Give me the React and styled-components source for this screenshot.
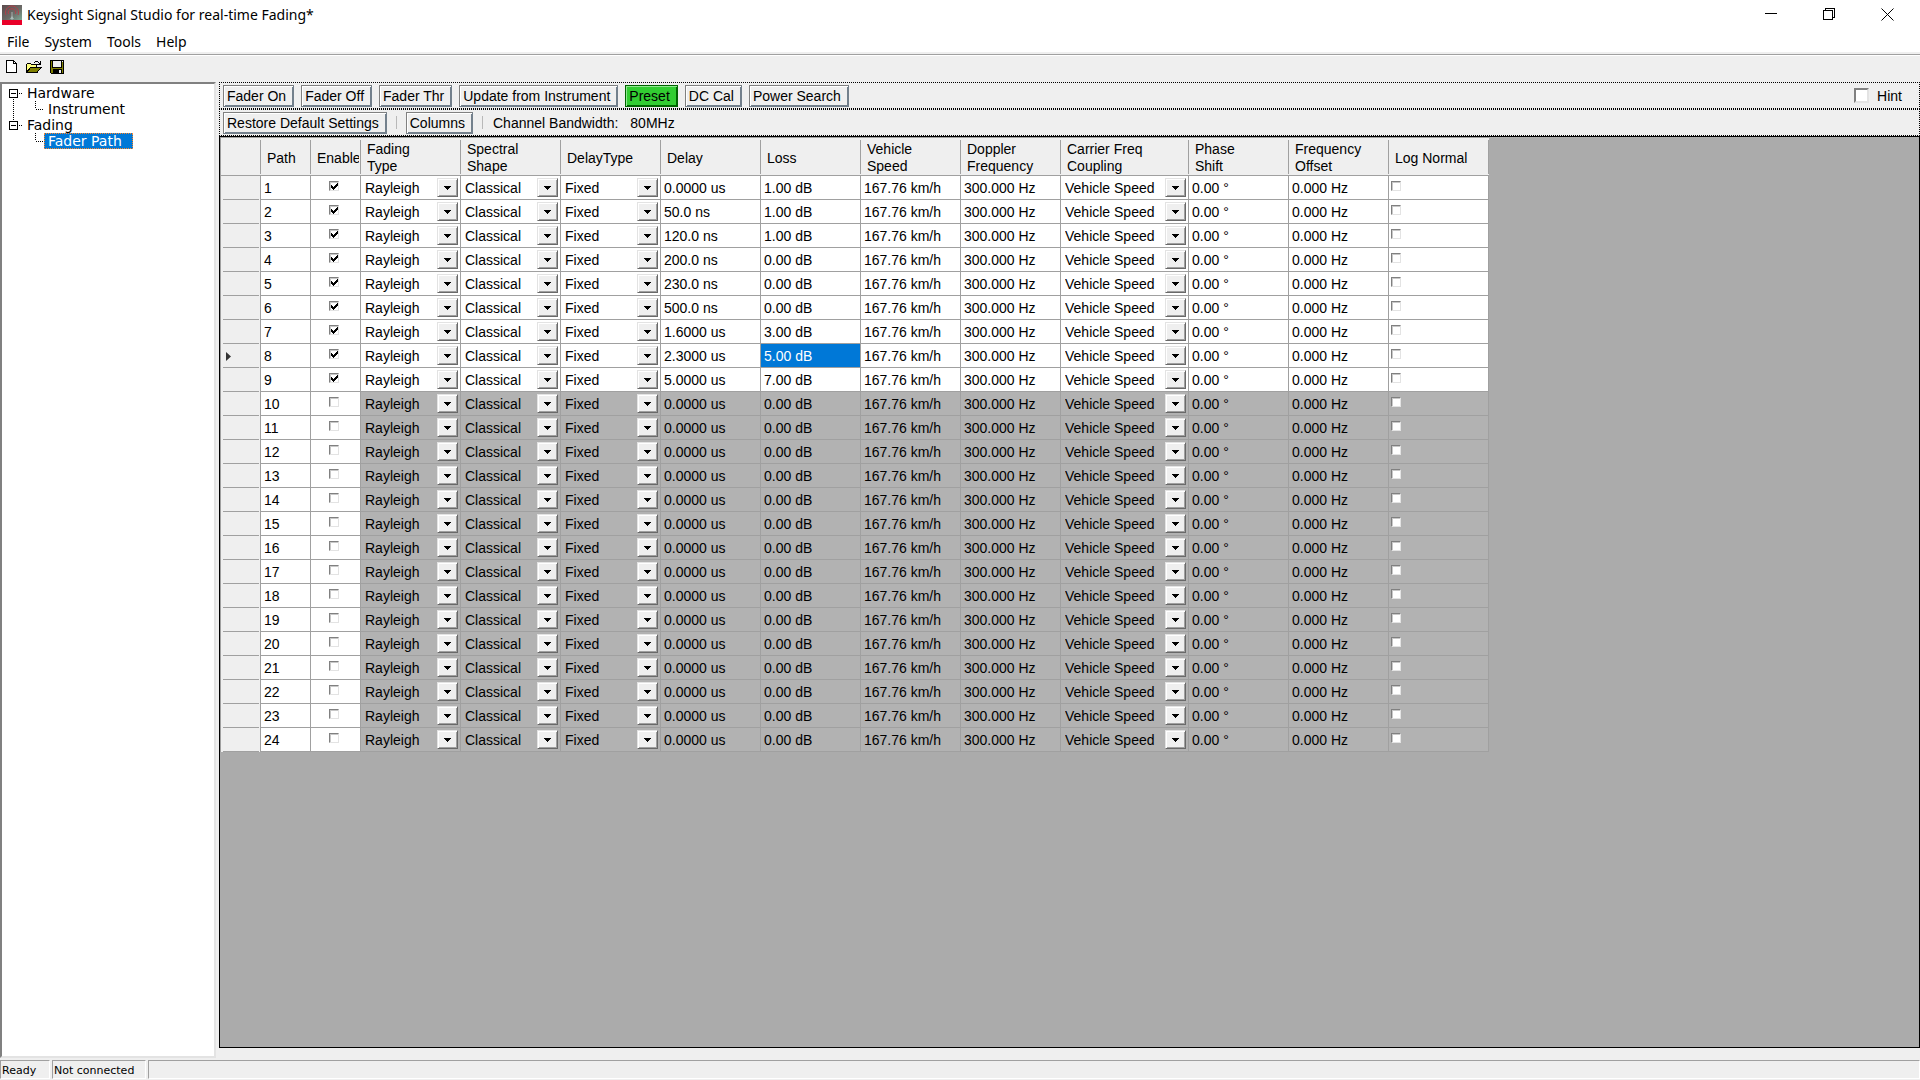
import React from "react";
import styled, { createGlobalStyle, css } from "styled-components";
import { useState } from "react";

const columns = [
    { label: "Path", width: 50 },
    { label: "Enable", width: 50 },
    { label: "Fading\nType", width: 100 },
    { label: "Spectral\nShape", width: 100 },
    { label: "DelayType", width: 100 },
    { label: "Delay", width: 100 },
    { label: "Loss", width: 100 },
    { label: "Vehicle\nSpeed", width: 100 },
    { label: "Doppler\nFrequency", width: 100 },
    { label: "Carrier Freq\nCoupling", width: 128 },
    { label: "Phase\nShift", width: 100 },
    { label: "Frequency\nOffset", width: 100 },
    { label: "Log Normal", width: 100 },
];

const activePaths = [
    ["0.0000 us", "1.00 dB"],
    ["50.0 ns", "1.00 dB"],
    ["120.0 ns", "1.00 dB"],
    ["200.0 ns", "0.00 dB"],
    ["230.0 ns", "0.00 dB"],
    ["500.0 ns", "0.00 dB"],
    ["1.6000 us", "3.00 dB"],
    ["2.3000 us", "5.00 dB"],
    ["5.0000 us", "7.00 dB"],
];

const initialPaths = Array.from({ length: 24 }, (_, i) => {
    const [delay, loss] = activePaths[i] || ["0.0000 us", "0.00 dB"];
    return { id: i + 1, enabled: i < activePaths.length, logNormal: false, delay, loss };
});

function Dropdown({ label, options }) {
    return (
        <DropdownBox>
            <select aria-label={label}>
                {options.map((option) => (
                    <option key={option}>{option}</option>
                ))}
            </select>
            <Arrow>
                <svg width="7" height="4" viewBox="0 0 7 4" shapeRendering="crispEdges">
                    <path d="M0 0h7v1H0zM1 1h5v1H1zM2 2h3v1H2zM3 3h1v1H3z" />
                </svg>
            </Arrow>
        </DropdownBox>
    );
}

function Check({ label, checked, onChange, filled }) {
    return (
        <CheckBox $filled={filled}>
            <input type="checkbox" aria-label={label} checked={checked} onChange={onChange} />
            {checked && (
                <svg width="7" height="7" viewBox="0 0 7 7" shapeRendering="crispEdges">
                    <path d="M0 2h1v3H0zM1 3h1v3H1zM2 4h1v3H2zM3 3h1v3H3zM4 2h1v3H4zM5 1h1v3H5zM6 0h1v3H6z" />
                </svg>
            )}
        </CheckBox>
    );
}

function TreeToggle({ label, trunk }) {
    return (
        <Toggle aria-label={label}>
            <svg width="18" height="16" viewBox="0 0 18 16" shapeRendering="crispEdges">
                {trunk && <path d={trunk} stroke="#000" strokeDasharray="1 1" />}
                <rect x="4.5" y="4.5" width="8" height="8" fill="#fff" stroke="#000" />
                <path d="M6 8.5h5" stroke="#000" />
                <path d="M14 8.5h4" stroke="#000" strokeDasharray="1 1" />
            </svg>
        </Toggle>
    );
}

function Branch({ trunk }) {
    return (
        <svg width="39" height="16" viewBox="0 0 39 16" shapeRendering="crispEdges">
            <g stroke="#000" strokeDasharray="1 1">
                {trunk && <path d="M8.5 0v16" />}
                <path d="M30.5 0v8" />
                <path d="M31 8.5h8" />
            </g>
        </svg>
    );
}

function AppIcon() {
    return (
        <svg width="20" height="20" viewBox="0 0 20 20">
            <defs>
                <linearGradient id="sky" x1="0" y1="0" x2="1" y2="1">
                    <stop offset="0" stopColor="#5c4a4c" />
                    <stop offset="0.55" stopColor="#6b6a66" />
                    <stop offset="1" stopColor="#7fae9a" />
                </linearGradient>
            </defs>
            <rect width="20" height="16" fill="url(#sky)" />
            <g fill="none" stroke="#b3404a" strokeWidth="1">
                <path d="M4 10a6.500 6.500 0 1 1 12 0" />
                <path d="M6.500 9a3.800 3.800 0 1 1 7 0" />
            </g>
            <path d="M10 7v8" stroke="#a9b2b0" />
            <path d="M8 14l2-3 2 3z" fill="#a9bcb8" />
            <rect y="15" width="20" height="5" fill="#e90029" />
        </svg>
    );
}

function TreePanel() {
    return (
        <Tree>
            <li>
                <TreeRow>
                    <TreeToggle label="Collapse Hardware" trunk="M8.5 14v2" />
                    <a href="#hardware">Hardware</a>
                </TreeRow>
                <ul>
                    <TreeRow as="li">
                        <Branch trunk />
                        <a href="#instrument">Instrument</a>
                    </TreeRow>
                </ul>
            </li>
            <li>
                <TreeRow>
                    <TreeToggle label="Collapse Fading" trunk="M8.5 0v4" />
                    <a href="#fading">Fading</a>
                </TreeRow>
                <ul>
                    <TreeRow as="li" $selected>
                        <Branch />
                        <a href="#fader-path">Fader Path</a>
                    </TreeRow>
                </ul>
            </li>
        </Tree>
    );
}

function PathTable() {
    const [paths, setPaths] = useState(initialPaths);
    const selected = 8;

    const toggle = (id, key) => {
        setPaths(paths.map((p) => (p.id === id ? { ...p, [key]: !p[key] } : p)));
    };

    return (
        <Grid>
            <colgroup>
                <Col $width={40} />
                {columns.map((c) => (
                    <Col key={c.label} $width={c.width} />
                ))}
            </colgroup>
            <thead>
                <tr>
                    <HeadCell />
                    {columns.map((c) => (
                        <HeadCell key={c.label}>
                            <HeadText>{c.label}</HeadText>
                        </HeadCell>
                    ))}
                </tr>
            </thead>
            <tbody>
                {paths.map((p) => (
                    <tr key={p.id}>
                        <RowHead>
                            {p.id === selected && (
                                <svg width="5" height="9" viewBox="0 0 5 9">
                                    <path d="M0 0l5 4.500L0 9z" fill="#333" />
                                </svg>
                            )}
                        </RowHead>
                        <Cell>{p.id}</Cell>
                        <CheckCell $center>
                            <Check label={`Enable path ${p.id}`} checked={p.enabled} onChange={() => toggle(p.id, "enabled")} />
                        </CheckCell>
                        <DropdownCell $off={!p.enabled}>
                            <Dropdown label="Fading Type" options={["Rayleigh", "Rician"]} />
                        </DropdownCell>
                        <DropdownCell $off={!p.enabled}>
                            <Dropdown label="Spectral Shape" options={["Classical", "Flat"]} />
                        </DropdownCell>
                        <DropdownCell $off={!p.enabled}>
                            <Dropdown label="DelayType" options={["Fixed", "Sliding"]} />
                        </DropdownCell>
                        <Cell $off={!p.enabled}>{p.delay}</Cell>
                        <Cell $off={!p.enabled} $selected={p.id === selected}>{p.loss}</Cell>
                        <Cell $off={!p.enabled}>167.76 km/h</Cell>
                        <Cell $off={!p.enabled}>300.000 Hz</Cell>
                        <DropdownCell $off={!p.enabled}>
                            <Dropdown label="Carrier Freq Coupling" options={["Vehicle Speed", "Doppler"]} />
                        </DropdownCell>
                        <Cell $off={!p.enabled}>0.00 °</Cell>
                        <Cell $off={!p.enabled}>0.000 Hz</Cell>
                        <CheckCell $off={!p.enabled}>
                            <Check
                                label={`Log normal path ${p.id}`}
                                checked={p.logNormal}
                                onChange={() => toggle(p.id, "logNormal")}
                                filled={!p.enabled}
                            />
                        </CheckCell>
                    </tr>
                ))}
            </tbody>
        </Grid>
    );
}

function App() {
    const [hint, setHint] = useState(false);

    return (
        <Window>
            <GlobalStyle />
            <TitleBar>
                <AppIcon />
                <h1>Keysight Signal Studio for real-time Fading*</h1>
                <WindowButton aria-label="Minimize">
                    <svg width="13" height="13" viewBox="0 0 13 13" shapeRendering="crispEdges">
                        <path d="M0 5.500h12" stroke="#000" />
                    </svg>
                </WindowButton>
                <WindowButton aria-label="Restore">
                    <svg width="13" height="13" viewBox="0 0 13 13" fill="none" stroke="#000" shapeRendering="crispEdges">
                        <path d="M.5 2.500h9v9h-9zM2.500 2.500v-2h9v9h-2" />
                    </svg>
                </WindowButton>
                <WindowButton aria-label="Close">
                    <svg width="13" height="13" viewBox="0 0 13 13">
                        <path d="M.5.5l12 12M12.500.5l-12 12" stroke="#000" />
                    </svg>
                </WindowButton>
            </TitleBar>
            <MenuBar>
                <button>File</button>
                <button>System</button>
                <button>Tools</button>
                <button>Help</button>
            </MenuBar>
            <ToolBar>
                <button aria-label="New">
                    <svg width="12" height="14" viewBox="0 0 12 14" shapeRendering="crispEdges">
                        <path d="M.5.5h7l3 3v9H.5z" fill="#fff" stroke="#000" />
                        <path d="M7.500.5v3h3" fill="none" stroke="#000" />
                    </svg>
                </button>
                <button aria-label="Open">
                    <svg width="16" height="14" viewBox="0 0 16 14" shapeRendering="crispEdges">
                        <path d="M.5 12.500v-8l1-1h3l1 1h5v3h-6z" fill="#ffff7f" stroke="#000" />
                        <path d="M.5 12.500l4-5h10.500l-4 5z" fill="#808000" stroke="#000" />
                        <path d="M8 2h1v1H8zM9 1h3v1H9zM12 2h1v1h-1zM13 3h1v1h-1zM14 1h1v4h-1zM11 4h3v1h-3z" />
                    </svg>
                </button>
                <button aria-label="Save">
                    <svg width="14" height="14" viewBox="0 0 14 14" shapeRendering="crispEdges">
                        <path d="M.5.5h13v13h-12l-1-1z" fill="#808000" stroke="#000" />
                        <path d="M3 1h8v6H3z" fill="#efefef" />
                        <path d="M2 1h1v6h8V1h1v7H2z" />
                        <path d="M3 9h9v4H3z" />
                        <path d="M9 10h2v3H9zM12 1h1v1h-1z" fill="#efefef" />
                    </svg>
                </button>
            </ToolBar>
            <Main>
                <TreePanel />
                <Workspace>
                    <Strip>
                        <Button>Fader On</Button>
                        <Button>Fader Off</Button>
                        <Button>Fader Thr</Button>
                        <Button>Update from Instrument</Button>
                        <Button $green>Preset</Button>
                        <Button>DC Cal</Button>
                        <Button>Power Search</Button>
                        <Hint>
                            <input type="checkbox" checked={hint} onChange={() => setHint(!hint)} />
                            Hint
                        </Hint>
                    </Strip>
                    <Strip>
                        <Button>Restore Default Settings</Button>
                        <Divider />
                        <Button>Columns</Button>
                        <Divider />
                        <Info>
                            <span>Channel Bandwidth:</span>
                            <span>80MHz</span>
                        </Info>
                    </Strip>
                    <TableArea>
                        <PathTable />
                    </TableArea>
                </Workspace>
            </Main>
            <StatusBar>
                <Status $width={50}>Ready</Status>
                <Status $width={94}>Not connected</Status>
                <Status />
            </StatusBar>
        </Window>
    );
}

export default App;

const GlobalStyle = createGlobalStyle`
    * {
        box-sizing: border-box;
    }

    body {
        margin: 0;
        color: #000;
        background-color: #efefef;
        font-family: "Liberation Sans", Arial, sans-serif;
        font-size: 14px;
    }

    button, input, select {
        margin: 0;
        padding: 0;
        border: none;
        border-radius: 0;
        color: inherit;
        background: none;
        font: inherit;
    }

    svg {
        display: block;
        flex-shrink: 0;
    }
`;

const Window = styled.div`
    display: flex;
    flex-direction: column;
    min-height: 100vh;
`;

const TitleBar = styled.header`
    display: flex;
    align-items: center;
    height: 29px;
    padding: 0 4px 0 2px;
    background-color: white;

    > h1 {
        flex: 1;
        margin: 0 0 0 5px;
        font-family: "Noto Sans", sans-serif;
        font-size: 14px;
        font-weight: 400;
    }
`;

const WindowButton = styled.button`
    display: grid;
    place-items: center;
    width: 58px;
    height: 29px;
`;

const MenuBar = styled.nav`
    display: flex;
    gap: 15px;
    height: 23px;
    padding: 1px 7px 0;
    background-color: white;
    font-family: "Noto Sans", sans-serif;
    font-size: 14px;
`;

const ToolBar = styled.div`
    display: flex;
    align-items: center;
    gap: 8px;
    height: 30px;
    padding: 0 6px 2px;
    border-top: 2px solid #efefef;
    box-shadow: inset 0 1px #a0a0a0, inset 0 2px white;
`;

const Main = styled.main`
    display: flex;
    flex: 1;
    gap: 3px;
`;

const Tree = styled.ul`
    width: 216px;
    margin: 0;
    padding: 1px 0;
    list-style: none;
    border: 2px solid;
    border-color: #808080 #e3e3e3 #e3e3e3 #808080;
    background-color: white;
    font-family: "DejaVu Sans", Verdana, sans-serif;
    font-size: 14px;

    ul {
        margin: 0;
        padding: 0;
        list-style: none;
    }
`;

const TreeRow = styled.div`
    display: flex;
    align-items: center;
    height: 16px;
    padding-left: 3px;
    line-height: 14px;

    > a {
        padding: 0 3px;
        border: 1px solid transparent;
        color: inherit;
        text-decoration: none;
        ${(p) => p.$selected && css`
            padding-right: 10px;
            border: 1px dotted #ff8728;
            color: white;
            background-color: #0078d7;
        `}
    }
`;

const Toggle = styled.button`
    display: flex;
`;

const Workspace = styled.section`
    display: flex;
    flex: 1;
    flex-direction: column;
    min-width: 0;
    margin-bottom: 10px;
`;

const Strip = styled.div`
    display: flex;
    align-items: center;
    gap: 7px;
    height: 27px;
    padding: 0 17px 0 3px;
    border: 1px dotted black;
`;

const Button = styled.button`
    height: 22px;
    padding: 0 7px 0 3px;
    border: 1px solid #808080;
    border-color: #808080 #73808c #73808c #808080;
    box-shadow: inset 1px 1px white, inset -1px -1px #73808c;
    white-space: nowrap;
    ${(p) => p.$green && css`
        border-color: #006400;
        background-color: #32cd32;
        box-shadow: inset 1px 1px #90e890, inset -1px -1px #006400;
    `}
`;

const Divider = styled.span`
    width: 1px;
    height: 13px;
    margin: 0 2px;
    background-color: #b8b8b8;
`;

const Info = styled.div`
    display: flex;
    gap: 12px;
    padding-left: 1px;
`;

const Hint = styled.label`
    display: flex;
    align-items: center;
    gap: 8px;
    margin-left: auto;

    > input {
        appearance: none;
        width: 15px;
        height: 15px;
        border: 2px solid;
        border-color: #808080 #e3e3e3 #e3e3e3 #808080;
        background-color: white;
    }

    > input:checked {
        background-color: black;
    }
`;

const TableArea = styled.div`
    flex: 1;
    border: 1px solid black;
    background-color: #ababab;
`;

const Grid = styled.table`
    table-layout: fixed;
    width: 1269px;
    border-collapse: separate;
    border-spacing: 0;
    border-top: 1px solid #a0a0a0;
    border-left: 1px solid #a0a0a0;
`;

const Col = styled.col`
    width: ${(p) => p.$width}px;
`;

const HeadCell = styled.th`
    height: 38px;
    padding: 3px 2px 0 6px;
    border-bottom: 1px solid #a0a0a0;
    text-align: left;
    font-weight: 400;
    line-height: 17px;
    background: linear-gradient(#a0a0a0, #a0a0a0) right center / 1px 34px no-repeat #efefef;
`;

const HeadText = styled.div`
    overflow: hidden;
    white-space: pre;
`;

const RowHead = styled.th`
    height: 24px;
    padding: 0 5px;
    border-right: 1px solid #a0a0a0;
    background: linear-gradient(#a0a0a0, #a0a0a0) center bottom / 36px 1px no-repeat #efefef;
`;

const Cell = styled.td`
    height: 24px;
    padding: 2px 3px 0;
    border-right: 1px solid #a0a0a0;
    border-bottom: 1px solid #a0a0a0;
    line-height: 17px;
    background-color: ${(p) => (p.$off ? "#b2b2b2" : "white")};
    ${(p) => p.$selected && css`
        color: white;
        background-color: #0078d7;
    `}
`;

const DropdownCell = styled(Cell)`
    padding: 0 1px 0 0;
`;

const CheckCell = styled(Cell)`
    padding: 0 5px 3px 2px;
    ${(p) => p.$center && css`
        > * {
            margin: 0 auto;
        }
    `}
`;

const DropdownBox = styled.div`
    display: grid;
    grid-template-columns: 1fr 21px;
    align-items: center;
    padding-right: 1px;

    > select {
        grid-area: 1 / 1 / 2 / 3;
        appearance: none;
        width: 100%;
        padding: 2px 0 0 4px;
    }
`;

const Arrow = styled.span`
    display: grid;
    place-items: center;
    grid-area: 1 / 2;
    height: 19px;
    border: 1px solid;
    border-color: #e3e3e3 #696969 #696969 #e3e3e3;
    box-shadow: inset 1px 1px white, inset -1px -1px #a0a0a0;
    background-color: #efefef;
    pointer-events: none;
`;

const CheckBox = styled.span`
    display: grid;
    place-items: center;
    width: 10px;
    height: 10px;

    > * {
        grid-area: 1 / 1;
    }

    > input {
        appearance: none;
        width: 10px;
        height: 10px;
        border: 1px solid;
        border-color: #808080 #e3e3e3 #e3e3e3 #808080;
        background-color: ${(p) => (p.$filled ? "white" : "transparent")};
        box-shadow: inset 1px 1px #c8c8c8;
    }

    > svg {
        pointer-events: none;
    }
`;

const StatusBar = styled.footer`
    display: flex;
    gap: 2px;
    height: 22px;
    padding: 2px 0 1px;
    font-family: "DejaVu Sans", Verdana, sans-serif;
    font-size: 11px;
`;

const Status = styled.div`
    display: flex;
    align-items: center;
    flex: ${(p) => (p.$width ? "none" : "1")};
    width: ${(p) => (p.$width ? `${p.$width}px` : "auto")};
    padding: 1px 0 0 1px;
    border: 1px solid;
    border-color: #a0a0a0 white white #a0a0a0;
`;
